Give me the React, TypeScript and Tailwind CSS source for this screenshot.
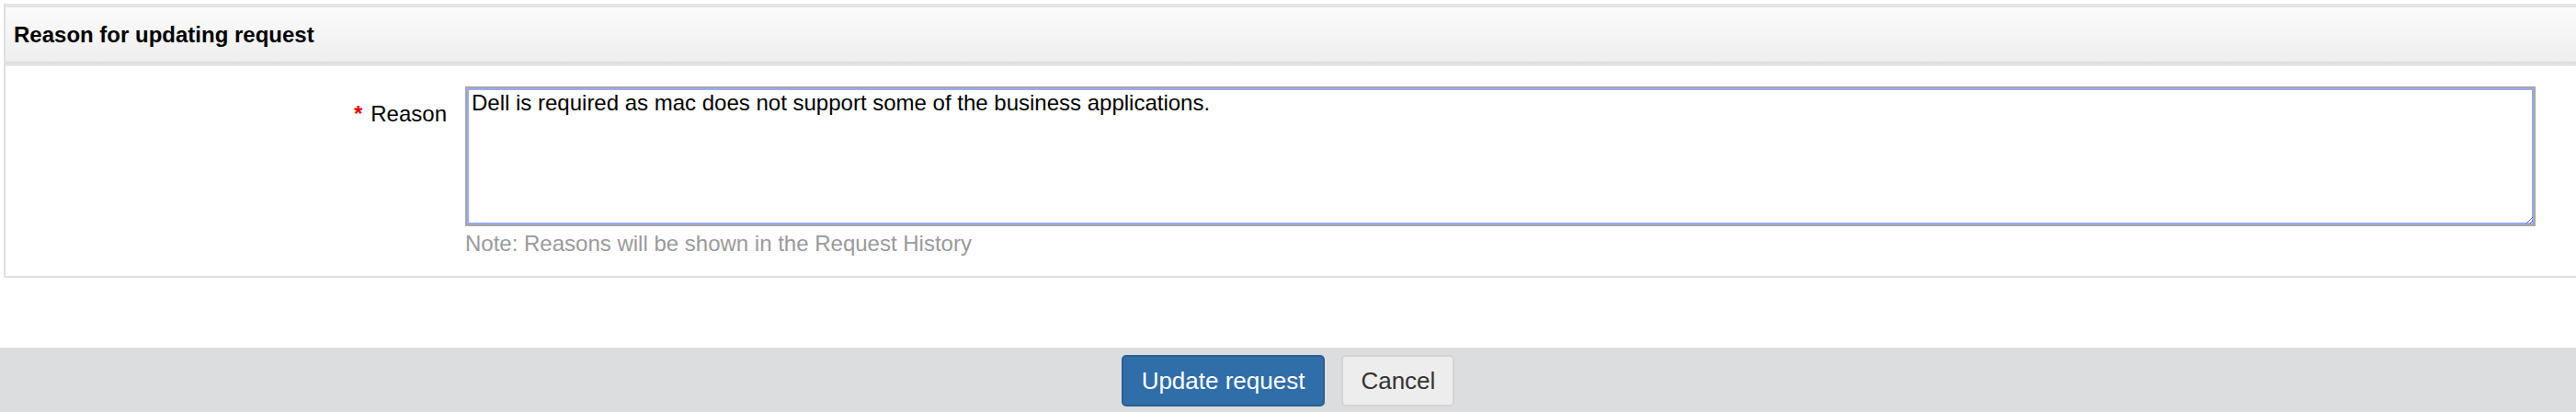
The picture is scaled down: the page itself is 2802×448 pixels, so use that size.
import React from "react";

export default function App() {
  return (
    <div className="w-[2802px] h-[448px] bg-white flex flex-col font-['Liberation_Sans',Arial,sans-serif] text-black overflow-hidden">
      {/* Panel */}
      <div className="h-[378px] pt-[4px] pl-[4px]">
        <div className="border-l-2 border-b-2 border-[#dfdfdf]">
          {/* Header */}
          <div className="border-t-4 border-[#e4e4e4]">
            <div className="h-[59px] bg-gradient-to-b from-[#fbfbfb] to-[#eeeeee] pl-[9px] pt-[16px]">
              <h2 className="text-[24px] leading-[28px] font-bold">Reason for updating request</h2>
            </div>
            <div className="h-[5px] bg-gradient-to-b from-[#d9d9d9] to-[#ebebeb]"></div>
          </div>

          {/* Body */}
          <div className="flex pt-[22px] pb-[21px]">
            <div className="w-[480px] shrink-0 pt-[16px] text-right text-[24px] leading-[28px]">
              <span className="text-[#e60000] font-bold mr-[9px]">*</span>
              Reason
            </div>
            <div className="ml-[20px] w-[2252px] shrink-0">
              <textarea
                defaultValue="Dell is required as mac does not support some of the business applications."
                className="block w-full h-[152px] border-2 border-[#a6a6a6] shadow-[inset_0_0_0_2px_#98aaf4] pl-[5px] pt-[2px] text-[24px] leading-[28px] text-black outline-none"
              />
              <p className="mt-[5px] text-[24px] leading-[28px] text-[#9a9a9a]">
                Note: Reasons will be shown in the Request History
              </p>
            </div>
          </div>
        </div>
      </div>

      {/* Footer actions */}
      <div className="flex-1 bg-[#dcdddf] flex justify-center items-start gap-[18px] pt-[8px]">
        <button className="h-[56px] px-[20px] border-2 border-[#2a5f90] rounded-[5px] bg-[#2f6ea8] text-white text-[26px] leading-[28px]">
          Update request
        </button>
        <button className="h-[56px] px-[19px] border-2 border-[#d4d4d4] rounded-[5px] bg-[#ededed] text-[#333333] text-[26px] leading-[28px]">
          Cancel
        </button>
      </div>
    </div>
  );
}
